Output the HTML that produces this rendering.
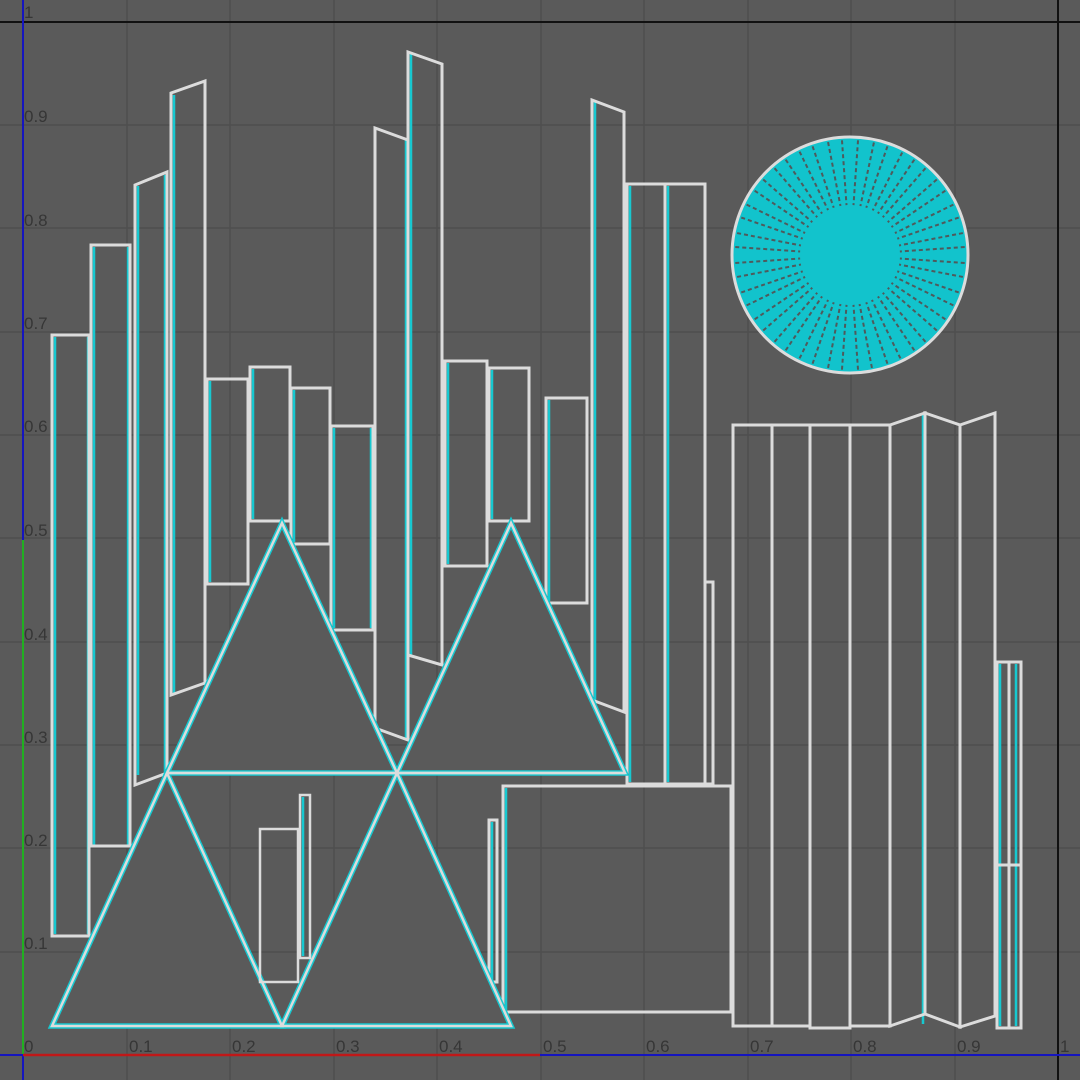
<!DOCTYPE html>
<html><head><meta charset="utf-8"><style>
html,body{margin:0;padding:0;background:#5a5a5a;}
svg{display:block}
text{font-family:"Liberation Sans",sans-serif;font-size:17px;fill:#363636;}
</style></head><body>
<svg width="1080" height="1080" viewBox="0 0 1080 1080" xmlns="http://www.w3.org/2000/svg">
<rect width="1080" height="1080" fill="#5a5a5a"/>
<g stroke="#4e4e4e" stroke-width="1.5">
<line x1="127" y1="0" x2="127" y2="1080"/><line x1="230" y1="0" x2="230" y2="1080"/><line x1="334" y1="0" x2="334" y2="1080"/><line x1="437" y1="0" x2="437" y2="1080"/><line x1="541" y1="0" x2="541" y2="1080"/><line x1="644" y1="0" x2="644" y2="1080"/><line x1="748" y1="0" x2="748" y2="1080"/><line x1="851" y1="0" x2="851" y2="1080"/><line x1="955" y1="0" x2="955" y2="1080"/>
<line x1="0" y1="125" x2="1080" y2="125"/><line x1="0" y1="228" x2="1080" y2="228"/><line x1="0" y1="332" x2="1080" y2="332"/><line x1="0" y1="435" x2="1080" y2="435"/><line x1="0" y1="538" x2="1080" y2="538"/><line x1="0" y1="642" x2="1080" y2="642"/><line x1="0" y1="745" x2="1080" y2="745"/><line x1="0" y1="848" x2="1080" y2="848"/><line x1="0" y1="952" x2="1080" y2="952"/>
</g>
<line x1="0" y1="22" x2="1080" y2="22" stroke="#111" stroke-width="2"/>
<line x1="1058" y1="0" x2="1058" y2="1080" stroke="#111" stroke-width="2"/>
<line x1="23" y1="0" x2="23" y2="540" stroke="#1515c0" stroke-width="2"/>
<line x1="23" y1="540" x2="23" y2="1055" stroke="#20b020" stroke-width="2"/>
<line x1="23" y1="1055" x2="23" y2="1080" stroke="#1515c0" stroke-width="2"/>
<line x1="0" y1="1055" x2="23" y2="1055" stroke="#1515c0" stroke-width="2"/>
<line x1="23" y1="1055" x2="540" y2="1055" stroke="#c01818" stroke-width="2.5"/>
<line x1="540" y1="1055" x2="1080" y2="1055" stroke="#1515c0" stroke-width="2"/>
<text x="24" y="18">1</text><text x="24" y="122">0.9</text><text x="24" y="226">0.8</text><text x="24" y="329">0.7</text><text x="24" y="432">0.6</text><text x="24" y="536">0.5</text><text x="24" y="640">0.4</text><text x="24" y="743">0.3</text><text x="24" y="846">0.2</text><text x="24" y="949">0.1</text>
<text x="24" y="1052">0</text><text x="129" y="1052">0.1</text><text x="232" y="1052">0.2</text><text x="336" y="1052">0.3</text><text x="439" y="1052">0.4</text><text x="543" y="1052">0.5</text><text x="646" y="1052">0.6</text><text x="750" y="1052">0.7</text><text x="853" y="1052">0.8</text><text x="957" y="1052">0.9</text><text x="1060" y="1052">1</text>

<g stroke="#17c8d0" stroke-width="2.5" fill="none">
<line x1="55" y1="337" x2="55" y2="934"/><line x1="88" y1="337" x2="88" y2="934"/>
<line x1="94" y1="247" x2="94" y2="846"/><line x1="128" y1="247" x2="128" y2="846"/>
<line x1="138" y1="186" x2="138" y2="775"/><line x1="165" y1="175" x2="165" y2="775"/>
<line x1="174" y1="95" x2="174" y2="693"/>
<line x1="210" y1="381" x2="210" y2="582"/><line x1="253" y1="369" x2="253" y2="519"/><line x1="294" y1="390" x2="294" y2="542"/><line x1="334" y1="428" x2="334" y2="628"/><line x1="371" y1="428" x2="371" y2="628"/>
<line x1="406" y1="140" x2="406" y2="740"/><line x1="411" y1="54" x2="411" y2="655"/>
<line x1="448" y1="363" x2="448" y2="564"/><line x1="492" y1="370" x2="492" y2="519"/><line x1="549" y1="400" x2="549" y2="601"/>
<line x1="595" y1="102" x2="595" y2="710"/><line x1="630" y1="186" x2="630" y2="782"/><line x1="668" y1="186" x2="668" y2="782"/>
<line x1="303" y1="797" x2="303" y2="956"/><line x1="492" y1="822" x2="492" y2="980"/><line x1="506" y1="788" x2="506" y2="1010"/>
<line x1="923" y1="415" x2="923" y2="1024"/><line x1="1000" y1="664" x2="1000" y2="1026"/><line x1="1016" y1="664" x2="1016" y2="1026"/>
</g>

<g stroke="#dcdcdc" stroke-width="3" fill="none" stroke-linejoin="miter">
<rect x="52" y="335" width="37" height="601"/>
<rect x="91" y="245" width="39" height="601"/>
<polygon points="135,185 167,172 167,773 135,785"/>
<polygon points="171,93 205,81 205,683 171,695"/>
<rect x="207" y="379" width="41" height="205"/>
<rect x="250" y="367" width="40" height="154"/>
<rect x="291" y="388" width="39" height="156"/>
<rect x="331" y="426" width="42" height="204"/>
<polygon points="375,128 408,140 408,740 375,728"/>
<polygon points="408,52 442,64 442,665 408,655"/>
<rect x="445" y="361" width="42" height="205"/>
<rect x="489" y="368" width="40" height="153"/>
<rect x="546" y="398" width="41" height="205"/>
<polygon points="592,100 624,112 624,712 592,700"/>
<rect x="627" y="184" width="38" height="600"/>
<rect x="665" y="184" width="40" height="600"/>
<rect x="705" y="582" width="8" height="202"/>
<rect x="489" y="820" width="8" height="162"/>
<rect x="503" y="786" width="228" height="226"/>
<rect x="733" y="425" width="39" height="601"/>
<rect x="772" y="425" width="38" height="601"/>
<rect x="810" y="425" width="40" height="603"/>
<rect x="850" y="425" width="40" height="601"/>
<polygon points="890,425 925,413 925,1014 890,1026"/>
<polygon points="925,413 960,425 960,1027 925,1014"/>
<polygon points="960,425 995,413 995,1016 960,1027"/>
<rect x="997" y="662" width="24" height="366"/>
<line x1="1009" y1="662" x2="1009" y2="1028"/>
<line x1="997" y1="865" x2="1021" y2="865"/>
</g>

<g stroke="#17c8d0" stroke-width="5.5" fill="#5a5a5a" stroke-linejoin="miter">
<polygon points="167,773 282,523 397,773"/>
<polygon points="397,773 511,523 625,773"/>
<polygon points="52,1026 167,773 282,1026"/>
<polygon points="282,1026 397,773 511,1026"/>
</g>
<g stroke="#dcdcdc" stroke-width="2.5" fill="none">
<polygon points="167,773 282,523 397,773"/>
<polygon points="397,773 511,523 625,773"/>
<polygon points="52,1026 167,773 282,1026"/>
<polygon points="282,1026 397,773 511,1026"/>
<line x1="167" y1="773" x2="625" y2="773"/>
<rect x="260" y="829" width="38" height="153"/>
<rect x="300" y="795" width="10" height="163"/>
</g>
<g stroke="#17c8d0" stroke-width="2"><line x1="303" y1="797" x2="303" y2="956"/></g>

<circle cx="850" cy="255" r="118" fill="#12c3cc"/>
<g stroke="#4f5a5c" stroke-width="2" stroke-dasharray="4 3" fill="none">
<line x1="850" y1="140" x2="850" y2="205" transform="rotate(4 850 255)"/>
<line x1="850" y1="140" x2="850" y2="205" transform="rotate(12 850 255)"/>
<line x1="850" y1="140" x2="850" y2="205" transform="rotate(19 850 255)"/>
<line x1="850" y1="140" x2="850" y2="205" transform="rotate(27 850 255)"/>
<line x1="850" y1="140" x2="850" y2="205" transform="rotate(34 850 255)"/>
<line x1="850" y1="140" x2="850" y2="205" transform="rotate(41 850 255)"/>
<line x1="850" y1="140" x2="850" y2="205" transform="rotate(49 850 255)"/>
<line x1="850" y1="140" x2="850" y2="205" transform="rotate(56 850 255)"/>
<line x1="850" y1="140" x2="850" y2="205" transform="rotate(64 850 255)"/>
<line x1="850" y1="140" x2="850" y2="205" transform="rotate(71 850 255)"/>
<line x1="850" y1="140" x2="850" y2="205" transform="rotate(79 850 255)"/>
<line x1="850" y1="140" x2="850" y2="205" transform="rotate(86 850 255)"/>
<line x1="850" y1="140" x2="850" y2="205" transform="rotate(94 850 255)"/>
<line x1="850" y1="140" x2="850" y2="205" transform="rotate(101 850 255)"/>
<line x1="850" y1="140" x2="850" y2="205" transform="rotate(109 850 255)"/>
<line x1="850" y1="140" x2="850" y2="205" transform="rotate(116 850 255)"/>
<line x1="850" y1="140" x2="850" y2="205" transform="rotate(124 850 255)"/>
<line x1="850" y1="140" x2="850" y2="205" transform="rotate(131 850 255)"/>
<line x1="850" y1="140" x2="850" y2="205" transform="rotate(139 850 255)"/>
<line x1="850" y1="140" x2="850" y2="205" transform="rotate(146 850 255)"/>
<line x1="850" y1="140" x2="850" y2="205" transform="rotate(154 850 255)"/>
<line x1="850" y1="140" x2="850" y2="205" transform="rotate(161 850 255)"/>
<line x1="850" y1="140" x2="850" y2="205" transform="rotate(169 850 255)"/>
<line x1="850" y1="140" x2="850" y2="205" transform="rotate(176 850 255)"/>
<line x1="850" y1="140" x2="850" y2="205" transform="rotate(184 850 255)"/>
<line x1="850" y1="140" x2="850" y2="205" transform="rotate(191 850 255)"/>
<line x1="850" y1="140" x2="850" y2="205" transform="rotate(199 850 255)"/>
<line x1="850" y1="140" x2="850" y2="205" transform="rotate(206 850 255)"/>
<line x1="850" y1="140" x2="850" y2="205" transform="rotate(214 850 255)"/>
<line x1="850" y1="140" x2="850" y2="205" transform="rotate(221 850 255)"/>
<line x1="850" y1="140" x2="850" y2="205" transform="rotate(229 850 255)"/>
<line x1="850" y1="140" x2="850" y2="205" transform="rotate(236 850 255)"/>
<line x1="850" y1="140" x2="850" y2="205" transform="rotate(244 850 255)"/>
<line x1="850" y1="140" x2="850" y2="205" transform="rotate(251 850 255)"/>
<line x1="850" y1="140" x2="850" y2="205" transform="rotate(259 850 255)"/>
<line x1="850" y1="140" x2="850" y2="205" transform="rotate(266 850 255)"/>
<line x1="850" y1="140" x2="850" y2="205" transform="rotate(274 850 255)"/>
<line x1="850" y1="140" x2="850" y2="205" transform="rotate(281 850 255)"/>
<line x1="850" y1="140" x2="850" y2="205" transform="rotate(289 850 255)"/>
<line x1="850" y1="140" x2="850" y2="205" transform="rotate(296 850 255)"/>
<line x1="850" y1="140" x2="850" y2="205" transform="rotate(304 850 255)"/>
<line x1="850" y1="140" x2="850" y2="205" transform="rotate(311 850 255)"/>
<line x1="850" y1="140" x2="850" y2="205" transform="rotate(319 850 255)"/>
<line x1="850" y1="140" x2="850" y2="205" transform="rotate(326 850 255)"/>
<line x1="850" y1="140" x2="850" y2="205" transform="rotate(334 850 255)"/>
<line x1="850" y1="140" x2="850" y2="205" transform="rotate(341 850 255)"/>
<line x1="850" y1="140" x2="850" y2="205" transform="rotate(349 850 255)"/>
<line x1="850" y1="140" x2="850" y2="205" transform="rotate(356 850 255)"/>
</g>
<circle cx="850" cy="255" r="118" fill="none" stroke="#dcdcdc" stroke-width="3"/>
</svg>
</body></html>
